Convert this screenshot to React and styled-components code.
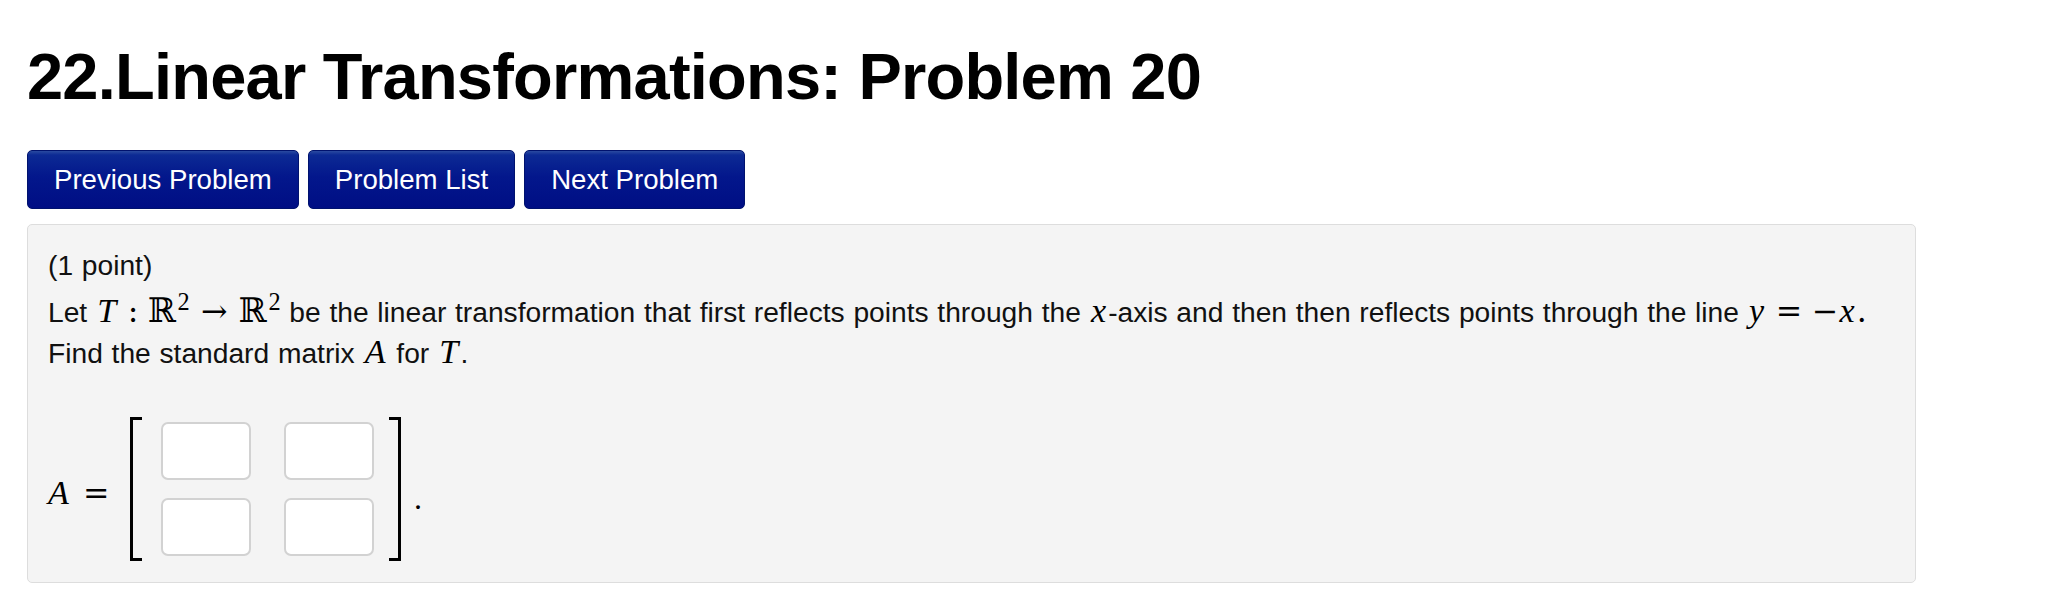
import React from 'react';
import styled, { createGlobalStyle } from 'styled-components';

const Global = createGlobalStyle`
  html, body { margin: 0; padding: 0; background: #fff; }
  body { font-family: "Liberation Sans", Arial, Helvetica, sans-serif; color: #111; }
`;

const Page = styled.div`
  padding: 0 0 0 27px;
`;

const Title = styled.h1`
  margin: 44px 0 0;
  font-family: "Liberation Sans", Arial, sans-serif;
  font-weight: 700;
  font-size: 65px;
  line-height: 65px;
  letter-spacing: -0.78px;
  color: #000;
`;

const ButtonRow = styled.div`
  display: flex;
  gap: 9px;
  margin-top: 41px;
`;

const NavButton = styled.button`
  box-sizing: border-box;
  height: 59px;
  padding: 0 26px;
  display: flex;
  align-items: center;
  border: 1px solid #00126e;
  border-radius: 5px;
  background: linear-gradient(to bottom, #2a4aa0 0px, #0c2a94 4px, #03178c 45%, #000e84 100%);
  color: #fff;
  font-family: "Liberation Sans", Arial, sans-serif;
  font-size: 27.6px;
  line-height: 33px;
  cursor: pointer;
`;

const ProblemBox = styled.div`
  box-sizing: border-box;
  width: 1889px;
  margin-top: 15px;
  padding: 21px 20px 21px 20px;
  background: #f4f4f4;
  border: 1px solid #dddddd;
  border-radius: 5px;
  font-size: 28.2px;
  color: #111;
`;

const Line = styled.div`
  line-height: 39px;
  white-space: nowrap;
  word-spacing: 0.9px;
  margin-top: ${(p) => p.$gap || 0}px;
`;

const MI = styled.i`
  font-family: "Liberation Serif", "DejaVu Serif", serif;
  font-style: italic;
  font-size: 1.21em;
  color: #000;
  margin: 0 ${(p) => p.$r ?? 0.06}em 0 ${(p) => p.$l ?? 0.04}em;
`;

const MO = styled.span`
  font-family: "DejaVu Serif", "Liberation Serif", serif;
  font-size: 1.12em;
  color: #000;
  margin: 0 ${(p) => p.$space ?? 0.3}em;
`;

const BB = styled.span`
  font-family: "DejaVu Serif", serif;
  font-size: 1.2em;
  color: #000;
`;

const Sup = styled.span`
  font-family: "Liberation Serif", "DejaVu Serif", serif;
  font-size: 0.72em;
  line-height: 0;
  vertical-align: 0.5em;
  margin-left: 0.06em;
`;

const MatrixRow = styled.div`
  display: flex;
  align-items: center;
  margin-top: 44px;
  color: #000;
`;

const Lhs = styled.div`
  display: flex;
  align-items: baseline;
  padding-top: 8px;
  margin-right: 11px;
`;

const Bracket = styled.div`
  box-sizing: border-box;
  width: 12px;
  height: 144px;
  border: 3px solid #000;
  ${(p) => (p.$side === 'left' ? 'border-right: none;' : 'border-left: none;')}
`;

const Cells = styled.div`
  display: grid;
  grid-template-columns: 90px 90px;
  grid-auto-rows: 58px;
  column-gap: 33px;
  row-gap: 18px;
  padding: 0 15px 0 19px;
`;

const Cell = styled.input`
  box-sizing: border-box;
  width: 90px;
  height: 58px;
  border: 2px solid #d2d2d2;
  border-radius: 7px;
  background: #fff;
  outline: none;
`;

const Period = styled.span`
  font-family: "Liberation Serif", serif;
  font-size: 32px;
  padding: 18px 0 0 13px;
`;

export default function App() {
  return (
    <Page>
      <Global />
      <Title>22.Linear Transformations: Problem 20</Title>
      <ButtonRow>
        <NavButton>Previous Problem</NavButton>
        <NavButton>Problem List</NavButton>
        <NavButton>Next Problem</NavButton>
      </ButtonRow>
      <ProblemBox>
        <Line>(1 point)</Line>
        <Line $gap={6}>
          Let <MI>T</MI>
          <MO>:</MO>
          <BB>ℝ<Sup>2</Sup></BB>
          <MO $space={0.36}>→</MO>
          <BB>ℝ<Sup>2</Sup></BB> be the linear transformation that first reflects points through the{' '}
          <MI>x</MI>-axis and then then reflects points through the line <MI>y</MI>
          <MO>=</MO>
          <MO $space={0}>−</MO>
          <MI>x</MI>
          <MO $space={0}>.</MO>
        </Line>
        <Line>
          Find the standard matrix <MI>A</MI> for <MI>T</MI>.
        </Line>
        <MatrixRow>
          <Lhs>
            <MI $l={0} $r={0.14}>A</MI>
            <MO>=</MO>
          </Lhs>
          <Bracket $side="left" />
          <Cells>
            <Cell />
            <Cell />
            <Cell />
            <Cell />
          </Cells>
          <Bracket $side="right" />
          <Period>.</Period>
        </MatrixRow>
      </ProblemBox>
    </Page>
  );
}
